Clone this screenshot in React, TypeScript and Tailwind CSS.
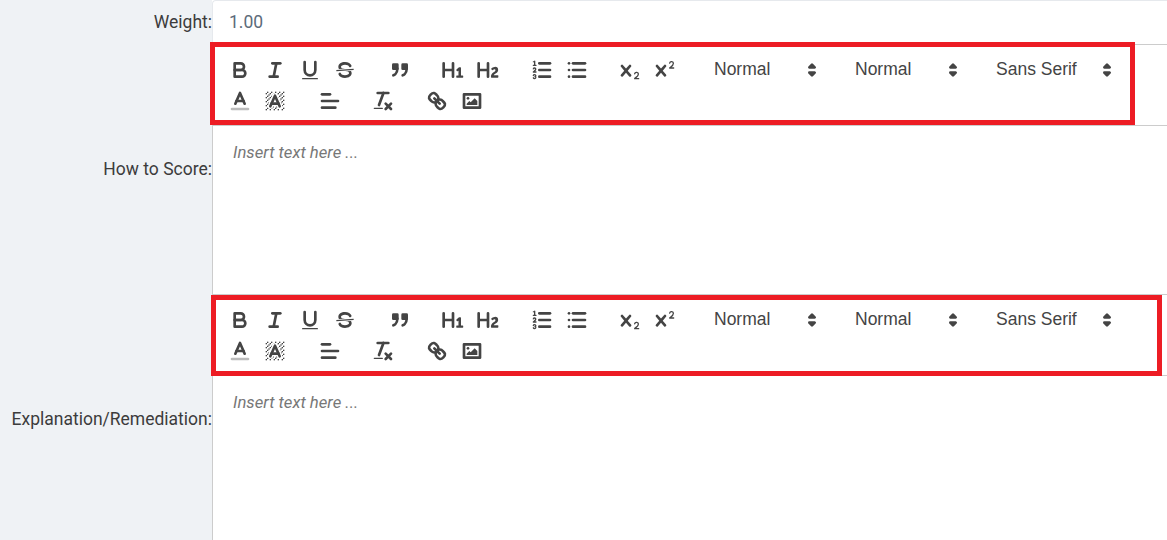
import React from "react";

const S = "#444";
const st = { stroke: S, strokeWidth: 2, fill: "none", strokeLinecap: "round", strokeLinejoin: "round" } as const;
const thin = { ...st, strokeWidth: 1 };
const fl = { fill: S };

function Ic({ children, size = 24 }: { children: React.ReactNode; size?: number }) {
  return (
    <svg viewBox="0 0 18 18" width={size} height={size} className="block">
      {children}
    </svg>
  );
}

const cells = [
  [4, 4], [2, 6], [3, 5], [4, 7], [2, 12], [2, 9], [2, 15], [3, 8], [12, 2], [11, 3], [2, 3], [6, 2], [3, 2], [5, 3], [9, 2],
  [15, 14], [13, 7], [15, 5], [14, 6], [15, 8], [14, 9], [14, 3], [15, 2], [12, 5], [13, 4], [9, 14], [8, 15], [5, 15], [11, 15], [14, 15], [15, 11],
];

const icons: Record<string, React.ReactNode> = {
  bold: (
    <>
      <path {...st} d="M5,4H9.5A2.5,2.5,0,0,1,12,6.5v0A2.5,2.5,0,0,1,9.5,9H5A0,0,0,0,1,5,9V4A0,0,0,0,1,5,4Z" />
      <path {...st} d="M5,9h5.5A2.5,2.5,0,0,1,13,11.5v0A2.5,2.5,0,0,1,10.5,14H5a0,0,0,0,1,0,0V9A0,0,0,0,1,5,9Z" />
    </>
  ),
  italic: (
    <>
      <line {...st} x1="7" x2="13" y1="4" y2="4" />
      <line {...st} x1="5" x2="11" y1="14" y2="14" />
      <line {...st} x1="8" x2="10" y1="14" y2="4" />
    </>
  ),
  underline: (
    <>
      <path {...st} d="M5,3V9a4.012,4.012,0,0,0,4,4H9a4.012,4.012,0,0,0,4-4V3" />
      <rect {...fl} height="1" rx="0.5" ry="0.5" width="12" x="3" y="15" />
    </>
  ),
  strike: (
    <>
      <line {...st} strokeLinecap="butt" strokeWidth={1} x1="15.5" x2="2.5" y1="8.5" y2="9.5" />
      <path {...fl} d="M9.007,8C6.542,7.791,6,7.519,6,6.5,6,5.792,7.283,5,9,5c1.571,0,2.765.679,2.969,1.309a1,1,0,0,0,1.9-.617C13.356,4.106,11.354,3,9,3,6.2,3,4,4.538,4,6.5a3.2,3.2,0,0,0,.5,1.843Z" />
      <path {...fl} d="M8.984,10C11.457,10.208,12,10.479,12,11.5c0,.708-1.283,1.5-3,1.5-1.571,0-2.765-.679-2.969-1.309a1,1,0,1,0-1.9.617C4.644,13.894,6.646,15,9,15c2.8,0,5-1.538,5-3.5a3.2,3.2,0,0,0-.5-1.843Z" />
    </>
  ),
  quote: (
    <>
      <rect {...st} {...fl} height="3" width="3" x="4" y="5" />
      <rect {...st} {...fl} height="3" width="3" x="11" y="5" />
      <path {...st} d="M7,8c0,4.031-3,5-3,5" />
      <path {...st} d="M14,8c0,4.031-3,5-3,5" />
    </>
  ),
  h1: (
    <path {...fl} d="M10,4V14a1,1,0,0,1-2,0V10H3v4a1,1,0,0,1-2,0V4A1,1,0,0,1,3,4V8H8V4a1,1,0,0,1,2,0Zm6.06787,9.209H14.98975V7.59863a.54085.54085,0,0,0-.605-.60547h-.62744a1.01119,1.01119,0,0,0-.748.29688L11.645,8.56641a.5435.5435,0,0,0-.022.8584l.28613.30762a.53861.53861,0,0,0,.84717.0332l.09912-.08789a1.2137,1.2137,0,0,0,.2417-.35254h.02246s-.01123.30859-.01123.60547V13.209H12.041a.54085.54085,0,0,0-.605.60547v.43945a.54085.54085,0,0,0,.605.60547h4.02686a.54085.54085,0,0,0,.605-.60547v-.43945A.54085.54085,0,0,0,16.06787,13.209Z" />
  ),
  h2: (
    <path {...fl} d="M16.73975,13.81445v.43945a.54085.54085,0,0,1-.605.60547H11.855a.58392.58392,0,0,1-.64893-.60547V14.0127c0-2.90527,3.39941-3.42187,3.39941-4.74219a.77675.77675,0,0,0-.84717-.78125,1.17684,1.17684,0,0,0-.83594.38477c-.2749.26367-.561.374-.85791.13184l-.4292-.34082c-.30811-.24219-.38525-.51758-.1543-.81445a2.97155,2.97155,0,0,1,2.45361-1.17676,2.45393,2.45393,0,0,1,2.68408,2.40918c0,2.45312-3.1792,2.92676-3.27832,3.93848h2.79443A.54085.54085,0,0,1,16.73975,13.81445ZM9,3A.99974.99974,0,0,0,8,4V8H3V4A1,1,0,0,0,1,4V14a1,1,0,0,0,2,0V10H8v4a1,1,0,0,0,2,0V4A.99974.99974,0,0,0,9,3Z" />
  ),
  ol: (
    <>
      <line {...st} x1="7" x2="15" y1="4" y2="4" />
      <line {...st} x1="7" x2="15" y1="9" y2="9" />
      <line {...st} x1="7" x2="15" y1="14" y2="14" />
      <line {...thin} x1="2.5" x2="4.5" y1="5.5" y2="5.5" />
      <path {...fl} d="M3.5,6A0.5,0.5,0,0,1,3,5.5V3.085l-0.276.138A0.5,0.5,0,0,1,2.053,3c-0.124-.247-0.023-0.324.224-0.447l1-.5A0.5,0.5,0,0,1,4,2.5v3A0.5,0.5,0,0,1,3.5,6Z" />
      <path {...thin} d="M4.5,10.5h-2c0-.234,1.85-1.076,1.85-2.234A0.959,0.959,0,0,0,2.5,8.156" />
      <path {...thin} d="M2.5,14.846a0.959,0.959,0,0,0,1.85-.109A0.7,0.7,0,0,0,3.75,14a0.688,0.688,0,0,0,.6-0.736,0.959,0.959,0,0,0-1.85-.109" />
    </>
  ),
  ul: (
    <>
      <line {...st} x1="6" x2="15" y1="4" y2="4" />
      <line {...st} x1="6" x2="15" y1="9" y2="9" />
      <line {...st} x1="6" x2="15" y1="14" y2="14" />
      <line {...st} x1="3" x2="3" y1="4" y2="4" />
      <line {...st} x1="3" x2="3" y1="9" y2="9" />
      <line {...st} x1="3" x2="3" y1="14" y2="14" />
    </>
  ),
  sub: (
    <>
      <path {...fl} d="M15.5,15H13.861a3.858,3.858,0,0,0,1.914-2.975,1.8,1.8,0,0,0-1.6-1.751A1.921,1.921,0,0,0,12.021,11.7a0.50013,0.50013,0,1,0,.957.291h0a0.914,0.914,0,0,1,1.053-.725,0.81,0.81,0,0,1,.744.762c0,1.076-1.16971,1.86982-1.93971,2.43082A1.45639,1.45639,0,0,0,12,15.5a0.5,0.5,0,0,0,.5.5h3A0.5,0.5,0,0,0,15.5,15Z" />
      <path {...fl} d="M9.65,5.241a1,1,0,0,0-1.409.108L6,7.964,3.759,5.349A1,1,0,0,0,2.192,6.59178Q2.21541,6.6213,2.241,6.649L4.684,9.5,2.241,12.35A1,1,0,0,0,3.71,13.70722q0.02557-.02768.049-0.05722L6,11.036,8.241,13.65a1,1,0,1,0,1.567-1.24277Q9.78459,12.3777,9.759,12.35L7.316,9.5,9.759,6.651A1,1,0,0,0,9.65,5.241Z" />
    </>
  ),
  sup: (
    <>
      <path {...fl} d="M15.5,7H13.861a4.015,4.015,0,0,0,1.914-2.975,1.8,1.8,0,0,0-1.6-1.751A1.922,1.922,0,0,0,12.021,3.7a0.5,0.5,0,1,0,.957.291,0.917,0.917,0,0,1,1.053-.725,0.81,0.81,0,0,1,.744.762c0,1.077-1.164,1.925-1.934,2.486A1.423,1.423,0,0,0,12,7.5a0.5,0.5,0,0,0,.5.5h3A0.5,0.5,0,0,0,15.5,7Z" />
      <path {...fl} d="M9.651,5.241a1,1,0,0,0-1.41.108L6,7.964,3.759,5.349a1,1,0,1,0-1.519,1.3L4.683,9.5,2.241,12.35a1,1,0,1,0,1.519,1.3L6,11.036l2.241,2.615a1,1,0,0,0,1.519-1.3L7.317,9.5,9.759,6.651A1,1,0,0,0,9.651,5.241Z" />
    </>
  ),
  color: (
    <>
      <line {...st} stroke="#bbb" x1="3" x2="15" y1="15" y2="15" />
      <polyline {...st} points="5.5 11 9 3 12.5 11" />
      <line {...st} x1="11.63" x2="6.38" y1="9" y2="9" />
    </>
  ),
  background: (
    <>
      {cells.map(([x, y]) => (
        <rect key={x + "-" + y} {...fl} x={x} y={y} width="1" height="1" />
      ))}
      <polygon {...fl} points="6 6.868 6 6 5 6 5 7 5.942 7 6 6.868" />
      <polygon {...fl} points="6.817 5 6 5 6 6 6.38 6 6.817 5" />
      <polygon {...fl} points="4 11.439 4 11 3 11 3 12 3.755 12 4 11.439" />
      <polygon {...fl} points="4.63 10 4 10 4 11 4.192 11 4.63 10" />
      <path {...fl} d="M10.832,4.2L11,4.582V4H10.708A1.948,1.948,0,0,1,10.832,4.2Z" />
      <path {...fl} d="M7,4.582L7.168,4.2A1.929,1.929,0,0,1,7.292,4H7V4.582Z" />
      <path {...fl} d="M8,13H7.683l-0.351.8a1.933,1.933,0,0,1-.124.2H8V13Z" />
      <path {...fl} d="M9,3H8V3.282A1.985,1.985,0,0,1,9,3Z" />
      <polygon {...fl} points="13.447 10.174 13.469 10.225 13.472 10.232 13.808 11 14 11 14 10 13.37 10 13.447 10.174" />
      <path {...fl} d="M3.775,14H3v1H4V14.314A1.97,1.97,0,0,1,3.775,14Z" />
      <polygon {...fl} points="12 6.868 12 6 11.62 6 12 6.868" />
      <polygon {...fl} points="12.933 9 13 9 13 8 12.495 8 12.933 9" />
      <path {...fl} d="M6,14.926V15H7V14.316A1.993,1.993,0,0,1,6,14.926Z" />
      <path {...fl} d="M10.668,13.8L10.317,13H10v1h0.792A1.947,1.947,0,0,1,10.668,13.8Z" />
      <path {...fl} d="M14.332,12.2a1.99,1.99,0,0,1,.166.8H15V12H14.245Z" />
      <polyline {...st} points="5.5 13 9 5 12.5 13" />
      <line {...st} x1="11.63" x2="6.38" y1="11" y2="11" />
    </>
  ),
  align: (
    <>
      <line {...st} x1="3" x2="15" y1="9" y2="9" />
      <line {...st} x1="3" x2="13" y1="14" y2="14" />
      <line {...st} x1="3" x2="9" y1="4" y2="4" />
    </>
  ),
  clean: (
    <>
      <line {...st} x1="5" x2="13" y1="3" y2="3" />
      <line {...st} x1="6" x2="9.35" y1="12" y2="3" />
      <line {...st} x1="11" x2="15" y1="11" y2="15" />
      <line {...st} x1="15" x2="11" y1="11" y2="15" />
      <rect {...fl} height="1" rx="0.5" ry="0.5" width="7" x="2" y="14" />
    </>
  ),
  link: (
    <>
      <line {...st} x1="7" x2="11" y1="7" y2="11" />
      <path {...st} d="M8.9,4.577a3.476,3.476,0,0,1,.36,4.679A3.476,3.476,0,0,1,4.577,8.9C3.185,7.5,2.035,6.4,4.217,4.217S7.5,3.185,8.9,4.577Z" />
      <path {...st} d="M13.423,9.1a3.476,3.476,0,0,0-4.679-.36,3.476,3.476,0,0,0,.36,4.679c1.392,1.392,2.5,2.542,4.679.36S14.815,10.5,13.423,9.1Z" />
    </>
  ),
  image: (
    <>
      <rect {...st} height="10" width="12" x="3" y="4" />
      <circle {...fl} cx="6" cy="7" r="1" />
      <polyline {...fl} points="5 12 5 11 7 9 8 10 11 7 13 9 13 12 5 12" />
    </>
  ),
};

function Btn({ name }: { name: string }) {
  return (
    <span className="flex h-[30px] w-[35px] items-center justify-center">
      <Ic>{icons[name]}</Ic>
    </span>
  );
}

function Group({ names, className }: { names: string[]; className: string }) {
  return (
    <span className={"flex " + className}>
      {names.map((n) => (
        <Btn key={n} name={n} />
      ))}
    </span>
  );
}

function Picker({ label, width, labelWidth }: { label: string; width: string; labelWidth: string }) {
  return (
    <span className={"flex h-[30px] items-center pl-[9px] font-['Liberation_Sans',sans-serif] text-[17.5px] text-[#444] " + width}>
      <span className={"-mt-0.5 " + labelWidth}>{label}</span>
      <svg viewBox="0 0 18 18" width={24} height={24} className="block">
        <polygon {...st} fill={S} points="7 11 9 13 11 11 7 11" />
        <polygon {...st} fill={S} points="7 7 9 5 11 7 7 7" />
      </svg>
    </span>
  );
}

function Toolbar({ boxClass }: { boxClass: string }) {
  return (
    <div className="relative h-[82px] border-y border-[#ccc] bg-white pl-[10px] pt-[10px]">
      <div className="flex flex-col">
        <div className="flex">
          <Group className="mr-5" names={["bold", "italic", "underline", "strike"]} />
          <Group className="mr-[18px]" names={["quote"]} />
          <Group className="mr-[19px]" names={["h1", "h2"]} />
          <Group className="mr-[18px]" names={["ol", "ul"]} />
          <Group className="mr-5" names={["sub", "sup"]} />
          <span className="ml-[3px] flex">
            <Picker label="Normal" width="w-[141px]" labelWidth="w-[86px]" />
            <Picker label="Normal" width="w-[141px]" labelWidth="w-[86px]" />
            <Picker label="Sans Serif" width="w-[153px]" labelWidth="w-[99px]" />
          </span>
        </div>
        <div className="mt-px flex">
          <Group className="mr-5" names={["color", "background"]} />
          <Group className="mr-[18px]" names={["align"]} />
          <Group className="mr-[19px]" names={["clean"]} />
          <Group className="mr-5" names={["link", "image"]} />
        </div>
      </div>
      <div className={"pointer-events-none absolute border-[5px] border-[#ed1c24] " + boxClass} />
    </div>
  );
}

function Editor({ h }: { h: string }) {
  return (
    <div className={"border-l border-[#ccc] pl-5 pt-[15px] text-[16.7px] italic leading-[24px] text-[#777] " + h}>
      Insert text here ...
    </div>
  );
}

export default function App() {
  return (
    <div className="flex h-[540px] w-[1167px] overflow-hidden bg-[#eff2f5] font-['Roboto',sans-serif] text-[17.5px] text-[#3c3c3c]">
      <div className="flex w-[212px] shrink-0 flex-col items-end text-right">
        <div className="mt-[10px] h-[24px] leading-[24px]">Weight:</div>
        <div className="mt-[123px] h-[24px] leading-[24px]">How to Score:</div>
        <div className="mt-[226px] h-[24px] leading-[24px]">Explanation/Remediation:</div>
      </div>
      <div className="min-w-0 flex-1 bg-white">
        <div className="h-[44px] rounded-tl-[4px] border-l border-t border-[#e6e9ed] pl-4 pt-[9px] leading-[24px] text-[#5c6b7a]">
          1.00
        </div>
        <Toolbar boxClass="-left-[2px] -top-[3px] h-[83px] w-[925px]" />
        <Editor h="h-[168px]" />
        <Toolbar boxClass="-left-[1px] top-0 h-[81px] w-[951px]" />
        <Editor h="h-[164px]" />
      </div>
    </div>
  );
}
